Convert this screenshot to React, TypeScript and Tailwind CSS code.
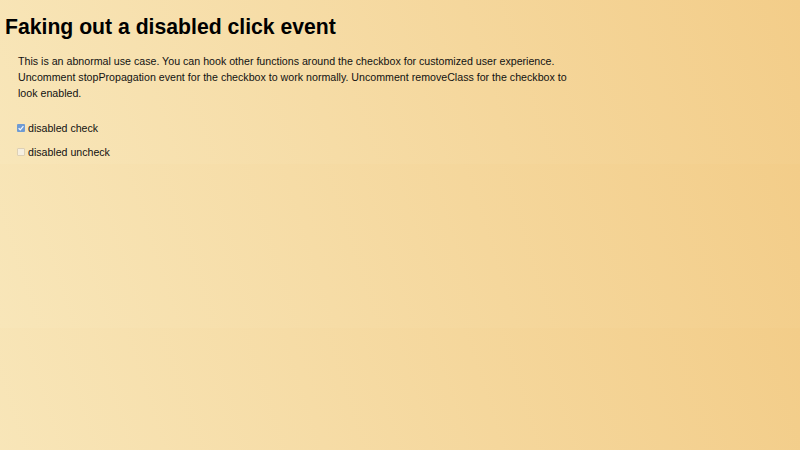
import React from 'react';

const FakeCheckbox = ({ checked }: { checked: boolean }) =>
  checked ? (
    <span className="inline-flex w-[8px] h-[8px] mr-[3px] rounded-[1px] bg-[#6f9bd3] items-center justify-center shrink-0">
      <svg viewBox="0 0 8 8" className="w-[8px] h-[8px]">
        <path d="M1.6 4.2 L3.3 5.8 L6.4 2.2" fill="none" stroke="#f4f7fb" strokeWidth="1.3" />
      </svg>
    </span>
  ) : (
    <span className="inline-block w-[8px] h-[8px] mr-[3px] rounded-[1px] bg-[#f6efe0] border border-[#ddd0b6] shrink-0" />
  );

const Row = ({ checked, label }: { checked: boolean; label: string }) => (
  <label className="flex items-center pl-[17px] text-[10.6px] leading-[16px] text-[#111]">
    <FakeCheckbox checked={checked} />
    <span>{label}</span>
  </label>
);

export default function App() {
  return (
    <div className="w-full h-[450px] overflow-hidden bg-[linear-gradient(72deg,#f8e6b9,#f3cd89)] bg-[length:100%_164px] bg-repeat font-['Liberation_Sans',Arial,sans-serif]">
      <h1 className="pl-[5px] pt-[15px] text-[21.2px] leading-[24px] font-bold text-black">
        Faking out a disabled click event
      </h1>
      <p className="mt-[14px] ml-[18px] w-[556px] text-[10.65px] leading-[16px] text-[#111]">
        This is an abnormal use case. You can hook other functions around the checkbox for customized user experience.
        Uncomment stopPropagation event for the checkbox to work normally. Uncomment removeClass for the checkbox to
        look enabled.
      </p>
      <div className="mt-[19px] flex flex-col gap-[8px]">
        <Row checked={true} label="disabled check" />
        <Row checked={false} label="disabled uncheck" />
      </div>
    </div>
  );
}
